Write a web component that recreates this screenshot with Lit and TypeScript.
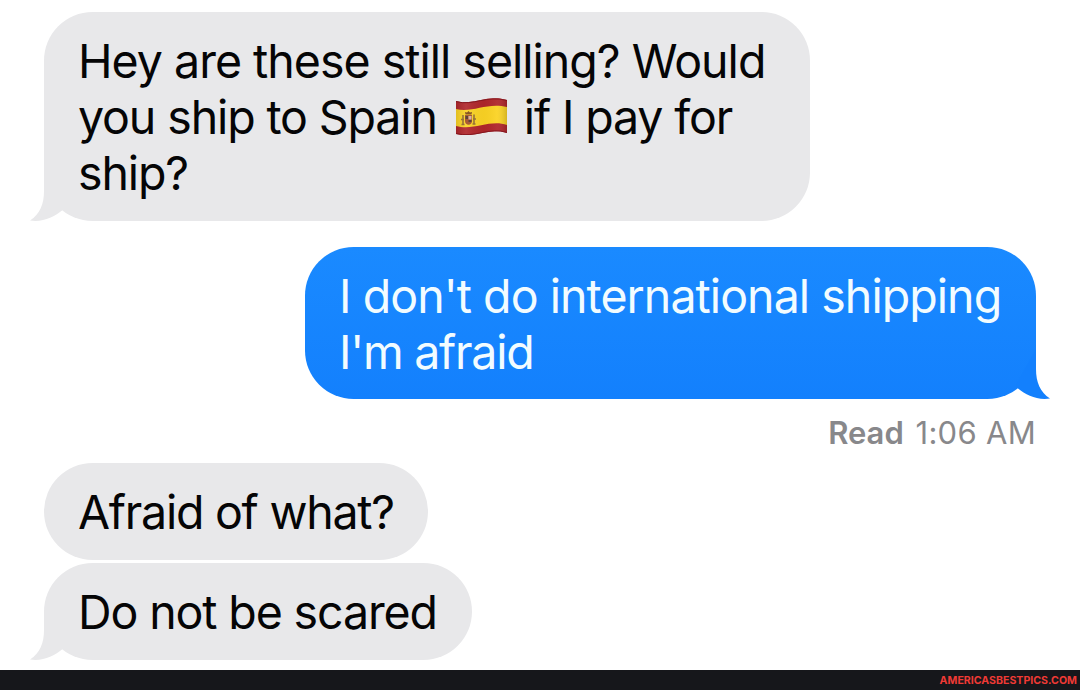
import { LitElement, css, html, nothing } from "lit";
import { customElement, property } from "lit/decorators.js";

@customElement("spain-flag")
export class SpainFlag extends LitElement {
  static styles = css`
    :host {
      display: inline-block;
      width: 51px;
      height: 37px;
      margin: 0 5px 0 7px;
      vertical-align: -1px;
    }

    svg {
      display: block;
    }
  `;

  render() {
    return html`
      <svg width="51" height="37" viewBox="0 0 51 37" role="img" aria-label="Spain">
        <defs>
          <linearGradient id="shade" x1="0" x2="1" y1="0" y2="0">
            <stop offset="0" stop-color="#000" stop-opacity="0.1" />
            <stop offset="0.2" stop-color="#fff" stop-opacity="0.08" />
            <stop offset="0.55" stop-color="#000" stop-opacity="0.03" />
            <stop offset="0.8" stop-color="#fff" stop-opacity="0.05" />
            <stop offset="1" stop-color="#000" stop-opacity="0.15" />
          </linearGradient>
        </defs>
        <path fill="#b0262b" d="M0 3C17 8 31-4 51 2V35C34 29 18 41 0 36Z" />
        <path fill="#fbd324" d="M0 11C17 15 31 4 51 9V27C34 21 18 33 0 28Z" />
        <path fill="url(#shade)" d="M0 3C17 8 31-4 51 2V35C34 29 18 41 0 36Z" />
        <path fill="none" stroke="#85171f" d="M0 3.5C17 8.5 31-3.5 51 2.5M0 35.5C18 40.5 34 28.5 51 34.5" />
        <path fill="none" stroke="#967238" stroke-width="1.6" d="M7 17V26M18 16.5V25.5M5.5 26.5H8.5M16.5 26H19.5M5 21.5H8M17 21H20" />
        <path fill="#a85a36" d="M9 17H16V23C16 28 9 28 9 23Z" />
        <path fill="#d8b3a0" d="M12.5 18H15.5V21.5H12.5Z" />
        <path fill="#5d4338" d="M9.5 18H12V21H9.5ZM12.5 22H15.5V24H12.5Z" />
        <path fill="#875425" d="M9.5 16.5L9 14L11 14.5L12.5 13L14 14.5L16 14L15.5 16.5Z" />
      </svg>
    `;
  }
}

@customElement("chat-bubble")
export class ChatBubble extends LitElement {
  static styles = css`
    :host {
      display: block;
      position: relative;
      box-sizing: border-box;
      padding: 21px 33px 20px 34px;
      border-radius: 48.5px;
      background: #e8e8ea;
      color: #050506;
    }

    :host([sent]) {
      align-self: flex-end;
      background: linear-gradient(#1a8aff, #1380fd);
      color: #f2fcff;
    }

    .tail {
      position: absolute;
      bottom: 0;
      left: -14px;
      fill: #e8e8ea;
    }

    :host([sent]) .tail {
      left: auto;
      right: -14px;
      fill: #1380fd;
      transform: scaleX(-1);
    }
  `;

  @property({ type: Boolean, reflect: true }) sent = false;
  @property({ type: Boolean }) tail = false;

  render() {
    return html`
      <slot></slot>
      ${this.tail
        ? html`
            <svg class="tail" width="34" height="50" viewBox="0 0 34 50">
              <path d="M14 0V20C14 33 10 43 0 49.5C13 51.5 24 46 32 39.5L34 36Z" />
            </svg>
          `
        : nothing}
    `;
  }
}

@customElement("app-root")
export class AppRoot extends LitElement {
  static styles = css`
    :host {
      display: flex;
      flex-direction: column;
      height: 690px;
      box-sizing: border-box;
      overflow: hidden;
      background: #fff;
      font-family: Inter, "Liberation Sans", sans-serif;
    }

    .thread {
      flex: 1;
      display: flex;
      flex-direction: column;
      box-sizing: border-box;
      padding: 12px 44px 0;
    }

    .line {
      display: block;
      font-size: 46.5px;
      line-height: 56px;
      letter-spacing: -1.12px;
      white-space: nowrap;
    }

    .wide {
      letter-spacing: -0.99px;
    }

    .wider {
      letter-spacing: -0.94px;
    }

    .tight {
      letter-spacing: -1.25px;
    }

    .question {
      width: 766px;
      height: 209px;
    }

    .answer {
      width: 731px;
      height: 152px;
      margin-top: 26px;
    }

    .receipt {
      align-self: flex-end;
      height: 64px;
      font-size: 31px;
      line-height: 68px;
      color: #88888b;
    }

    .receipt b {
      margin-right: 3px;
      font-weight: 600;
    }

    .time {
      letter-spacing: 0.3px;
    }

    .afraid {
      width: 384px;
      height: 97px;
    }

    .scared {
      width: 428px;
      height: 97px;
      margin-top: 3px;
    }

    .footer {
      height: 20px;
      padding-right: 3px;
      background: #16171b;
      color: #f03a35;
      font-size: 10.6px;
      font-weight: 700;
      line-height: 21px;
      text-align: right;
    }
  `;

  render() {
    return html`
      <main class="thread">
        <chat-bubble class="question" tail>
          <span class="line wide">Hey are these still selling? Would</span>
          <span class="line">you ship to Spain <spain-flag></spain-flag> if I pay for</span>
          <span class="line">ship?</span>
        </chat-bubble>
        <chat-bubble class="answer" sent tail>
          <span class="line wider">I don't do international shipping</span>
          <span class="line tight">I'm afraid</span>
        </chat-bubble>
        <div class="receipt"><b>Read</b> <span class="time">1:06 AM</span></div>
        <chat-bubble class="afraid">
          <span class="line tight">Afraid of what?</span>
        </chat-bubble>
        <chat-bubble class="scared" tail>
          <span class="line">Do not be scared</span>
        </chat-bubble>
      </main>
      <footer class="footer">AMERICASBESTPICS.COM</footer>
    `;
  }
}
